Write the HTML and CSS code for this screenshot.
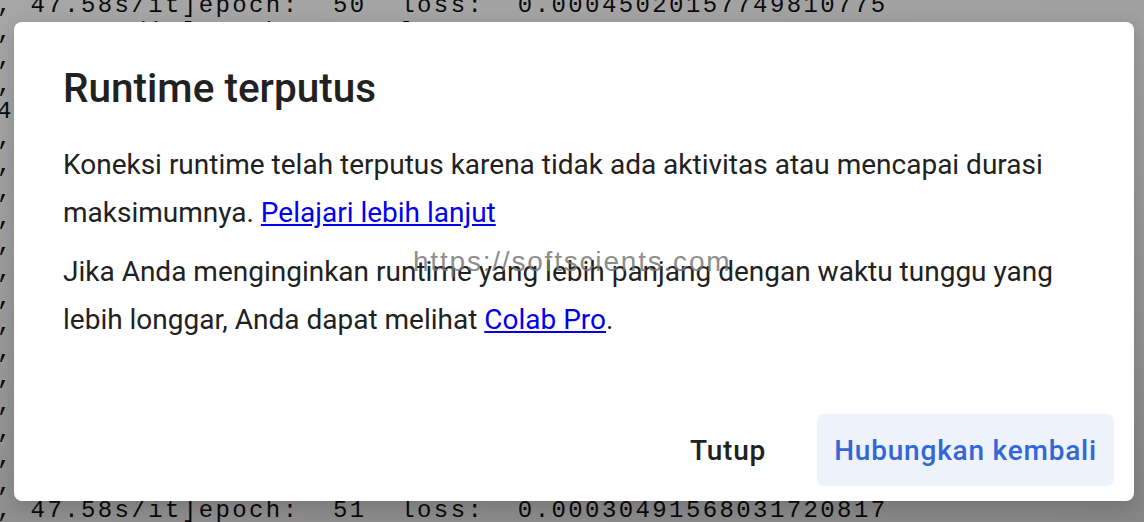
FILE: index.html
```html
<!DOCTYPE html>
<html lang="id">
<head>
<meta charset="utf-8">
<title>Runtime terputus</title>
<link rel="stylesheet" href="styles.css">
</head>
<body>
<div class="page">
<pre class="log">, 47.58s/it]epoch:  50  loss:  0.00045020157749810775
, 47.58s/it]epoch:  50  loss:  0.00045020157749810775
, 47.58s/it]epoch:  50  loss:  0.00045020157749810775
, 47.58s/it]epoch:  50  loss:  0.00045020157749810775
47.58s/it]epoch:  50  loss:  0.00045020157749810775
, 47.58s/it]epoch:  50  loss:  0.00045020157749810775
, 47.58s/it]epoch:  50  loss:  0.00045020157749810775
, 47.58s/it]epoch:  50  loss:  0.00045020157749810775
, 47.58s/it]epoch:  50  loss:  0.00045020157749810775
, 47.58s/it]epoch:  50  loss:  0.00045020157749810775
, 47.58s/it]epoch:  50  loss:  0.00045020157749810775
, 47.58s/it]epoch:  50  loss:  0.00045020157749810775
, 47.58s/it]epoch:  50  loss:  0.00045020157749810775
, 47.58s/it]epoch:  50  loss:  0.00045020157749810775
, 47.58s/it]epoch:  50  loss:  0.00045020157749810775
, 47.58s/it]epoch:  50  loss:  0.00045020157749810775
, 47.58s/it]epoch:  50  loss:  0.00045020157749810775
, 47.58s/it]epoch:  50  loss:  0.00045020157749810775
, 47.58s/it]epoch:  50  loss:  0.00045020157749810775
, 47.58s/it]epoch:  51  loss:  0.00030491568031720817</pre>
<div class="scrim"></div>
<div class="dialog" role="dialog">
  <h1 class="dialog-title">Runtime terputus</h1>
  <div class="dialog-content">
    <p>Koneksi runtime telah terputus karena tidak ada aktivitas atau mencapai durasi maksimumnya. <a href="#">Pelajari lebih lanjut</a></p>
    <p>Jika Anda menginginkan runtime yang lebih panjang dengan waktu tunggu yang lebih longgar, Anda dapat melihat <a href="#">Colab Pro</a>.</p>
  </div>
  <div class="dialog-actions">
    <button class="btn btn-text">Tutup</button>
    <button class="btn btn-tonal">Hubungkan kembali</button>
  </div>
</div>
<div class="watermark">https://softscients.com</div>
</div>
</body>
</html>
```

FILE: styles.css
```css
html, body {
  margin: 0;
  padding: 0;
}
body {
  width: 1144px;
  height: 522px;
  overflow: hidden;
  background: #fff;
}
.page {
  position: relative;
  width: 1144px;
  height: 522px;
  overflow: hidden;
}
.log {
  margin: -7px 0 0 -3px;
  padding: 0;
  font-family: "Liberation Mono", "Courier New", monospace;
  font-size: 24px;
  letter-spacing: 2.4px;
  line-height: 26.6px;
  color: #111;
  white-space: pre;
}
.scrim {
  position: absolute;
  inset: 0;
  background: linear-gradient(172deg, rgba(0,0,0,0.35) 0%, rgba(0,0,0,0.40) 50%, rgba(0,0,0,0.48) 100%);
}
.dialog {
  position: absolute;
  left: 14px;
  top: 22px;
  width: 1120px;
  height: 479px;
  box-sizing: border-box;
  background: #fff;
  border-radius: 8px;
  box-shadow: 0 6px 18px rgba(0,0,0,0.16);
  display: flex;
  flex-direction: column;
  font-family: Roboto, "Liberation Sans", Arial, sans-serif;
  color: #212121;
}
.dialog-title {
  margin: 0;
  padding: 43px 49px 0;
  font-size: 40.5px;
  font-weight: 500;
  line-height: 46px;
  color: #212121;
}
.dialog-content {
  padding: 30px 49px 0;
  font-size: 28px;
  line-height: 48px;
  flex: 1;
}
.dialog-content p {
  margin: 0 0 11px;
}
.dialog-content a {
  color: #0000ee;
  text-decoration: underline;
}
.dialog-actions {
  display: flex;
  justify-content: flex-end;
  align-items: center;
  gap: 34px;
  padding: 0 20px 15px;
}
.btn {
  height: 72px;
  padding: 0 17px;
  border: none;
  border-radius: 7px;
  background: transparent;
  font-family: Roboto, "Liberation Sans", Arial, sans-serif;
  font-size: 28px;
  font-weight: 500;
  letter-spacing: 0.8px;
  cursor: pointer;
}
.btn-text {
  color: #212121;
}
.btn-tonal {
  background: #eef2fb;
  color: #3367d6;
}
.watermark {
  position: absolute;
  left: 413px;
  top: 246px;
  font-family: "Liberation Sans", Arial, sans-serif;
  font-size: 28px;
  letter-spacing: 1.8px;
  color: rgba(120,120,120,0.85);
  pointer-events: none;
}
```
